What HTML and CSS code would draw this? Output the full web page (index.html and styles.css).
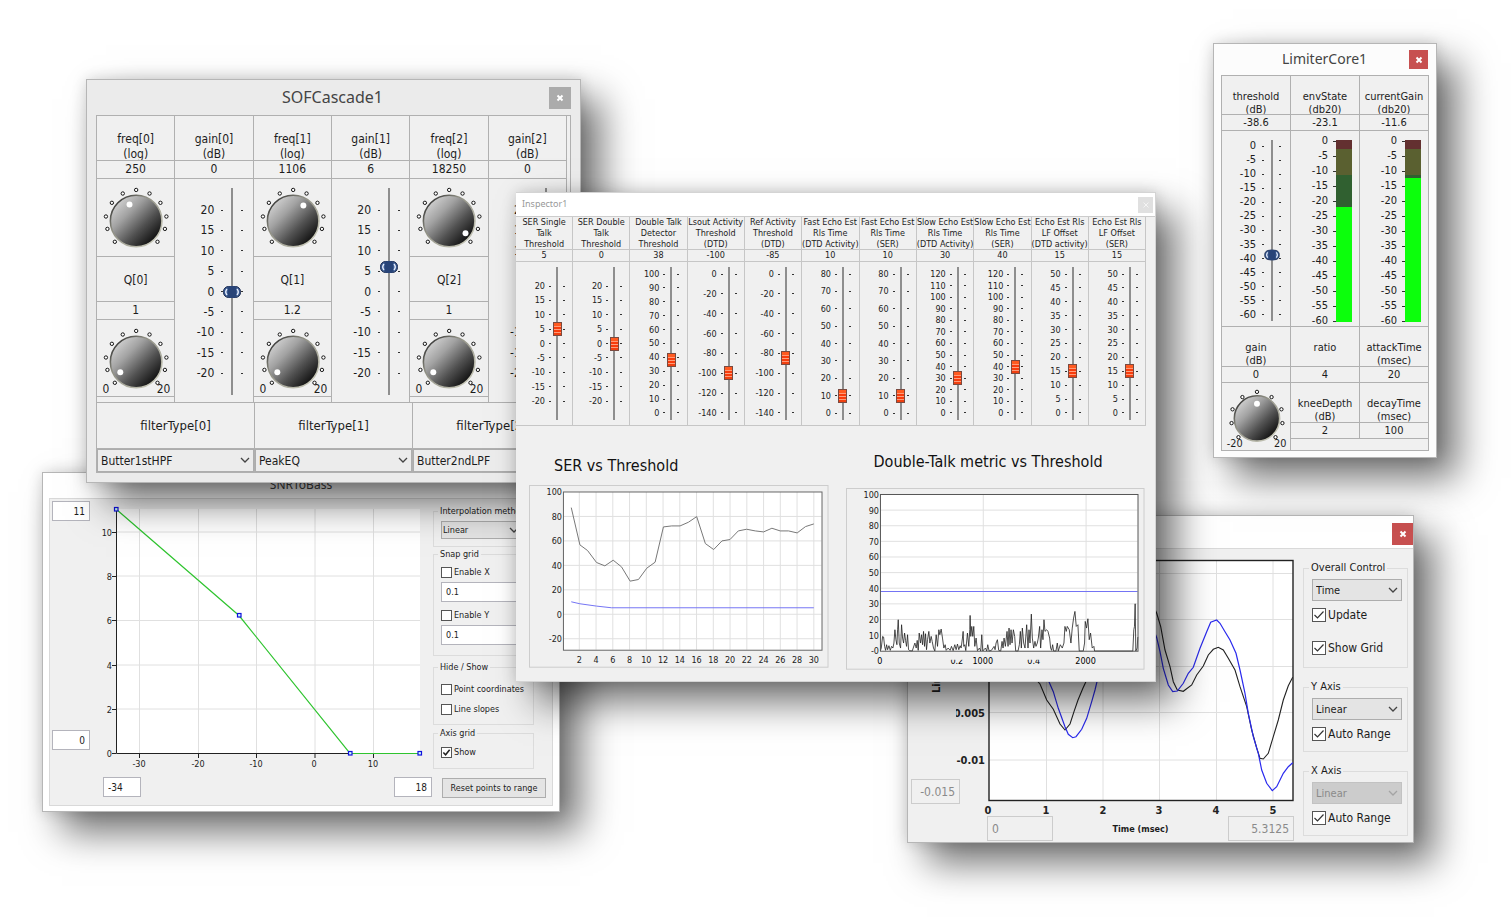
FILE: index.html
```html
<!DOCTYPE html>
<html lang="en">
<head>
<meta charset="utf-8">
<title>Audio tuning inspectors</title>
<link rel="stylesheet" href="styles.css">
</head>
<body>
<main class="desktop">

  <section class="window win-snr" aria-label="SNRToBass">
    <header class="titlebar"><h2 class="title">SNRToBass</h2></header>
    <div class="snr-body">
      <div class="snr-main">
        <div class="snr-range-y">
          <input class="field num" aria-label="Y maximum" value="11">
          <input class="field num" aria-label="Y minimum" value="0">
        </div>
        <svg class="snr-chart" viewBox="90 501 342 270" role="img" aria-label="Interpolation curve">
          <rect x="116" y="509" width="304" height="244" fill="#fff"/>
          <path class="grid" d="M139.5 509V753M198.500 509V753M256.500 509V753M315 509V753M373.500 509V753M116 532H420M116 576H420M116 620.500H420M116 665H420M116 709H420"/>
          <path d="M116.500 509V753.500H420M112 532.500h4M112 576.500h4M112 620.500h4M112 665.500h4M112 709.500h4M112 753.500h4M139.500 753v5M198.500 753v5M256.500 753v5M315 753v5M373.500 753v5" stroke="#222" fill="none"/>
          <g class="tick end"><text x="112" y="536">10</text><text x="112" y="580">8</text><text x="112" y="624">6</text><text x="112" y="669">4</text><text x="112" y="713">2</text><text x="112" y="757">0</text></g>
          <g class="tick mid"><text x="139" y="767">-30</text><text x="198" y="767">-20</text><text x="256" y="767">-10</text><text x="314" y="767">0</text><text x="373" y="767">10</text></g>
          <path d="M116.500 509.500L239 615.500L350 753.500H420" stroke="#2fc42f" stroke-width="1.200" fill="none"/>
          <g fill="#cfe" stroke="#1010e0" stroke-width="1.200"><rect x="114.500" y="507.500" width="3.500" height="3.500"/><rect x="237.500" y="613.500" width="3.500" height="3.500"/><rect x="348.500" y="751.500" width="3.500" height="3.500"/><rect x="418" y="751.500" width="3.500" height="3.500"/></g>
        </svg>
        <div class="snr-range-x">
          <input class="field" aria-label="X minimum" value="-34">
          <input class="field num" aria-label="X maximum" value="18">
        </div>
      </div>
      <div class="snr-side">
        <fieldset class="group g-interp"><legend>Interpolation method</legend>
          <select class="combo" aria-label="Interpolation method"><option>Linear</option></select>
        </fieldset>
        <fieldset class="group g-snap"><legend>Snap grid</legend>
          <label class="check"><input type="checkbox">Enable X</label>
          <input class="field wide" aria-label="X step" value="0.1">
          <label class="check"><input type="checkbox">Enable Y</label>
          <input class="field wide" aria-label="Y step" value="0.1">
        </fieldset>
        <fieldset class="group g-hide"><legend>Hide / Show</legend>
          <label class="check"><input type="checkbox">Point coordinates</label>
          <label class="check"><input type="checkbox">Line slopes</label>
        </fieldset>
        <fieldset class="group g-axis"><legend>Axis grid</legend>
          <label class="check"><input type="checkbox" checked>Show</label>
        </fieldset>
        <button class="push" type="button">Reset points to range</button>
      </div>
    </div>
  </section>

  <section class="window win-sof" aria-label="SOFCascade1">
    <header class="titlebar"><h2 class="title">SOFCascade1</h2><button class="close" type="button" aria-label="Close"><svg viewBox="0 0 8 8"><path d="M1.500 1.500L6.500 6.500M6.500 1.500L1.500 6.500"/></svg></button></header>
    <div class="sof-frame">
      <div class="sof-bands" id="bands"></div>
      <div class="sof-filters">
        <label class="cell" for="ft0">filterType[0]</label>
        <label class="cell" for="ft1">filterType[1]</label>
        <label class="cell" for="ft2">filterType[2]</label>
        <select class="combo" id="ft0"><option>Butter1stHPF</option></select>
        <select class="combo" id="ft1"><option>PeakEQ</option></select>
        <select class="combo" id="ft2"><option>Butter2ndLPF</option></select>
      </div>
    </div>
  </section>

  <section class="window win-time" aria-label="Time response">
    <header class="titlebar"><button class="close" type="button" aria-label="Close"><svg viewBox="0 0 8 8"><path d="M1.500 1.500L6.500 6.500M6.500 1.500L1.500 6.500"/></svg></button></header>
    <div class="time-body">
      <div class="time-main">
        <input class="field num y-min" aria-label="Y minimum" value="-0.015" disabled>
        <svg class="time-chart" viewBox="930 549 364 267" role="img" aria-label="Time plot">
          <rect x="989" y="561" width="304" height="240" fill="#fff"/>
          <path class="grid" d="M1046.500 561V800M1103 561V800M1159.500 561V800M1216.500 561V800M1273 561V800M989 573.500H1293M989 619.500H1293M989 666.500H1293M989 712.500H1293M989 760H1293"/>
          <rect x="989" y="560.500" width="304" height="240" fill="none" stroke="#222" stroke-width="1.400"/>
          <path d="M989 600L1000 590L1015 620L1036.700 680.300L1040 684L1046.700 700L1053.300 709.300L1060 724L1065 730L1070 724L1074 711.700L1078 700L1083 688L1086.700 680L1105 620L1130 585L1150 598L1156.700 613.300L1160.700 626.700L1165 650L1170 666.700L1173.300 681.700L1177.300 690L1183.300 691.300L1191.700 685L1196.700 675L1203.300 666L1208.300 655L1213.300 649.300L1218.300 647.300L1223.300 650L1228.300 658.300L1235 670L1240 686.700L1246.700 706.700L1251.700 730L1256.700 748L1260 758.300L1263.300 759L1268.300 753.300L1273.300 736.700L1278.300 720L1283.300 700L1288.300 685.700L1292.700 677.300" fill="none" stroke="#222" stroke-width="1.100"/>
          <path d="M989 600L1000 585L1020 610L1048.300 680.300L1053.300 691.700L1058.300 708.300L1065 726.700L1068.300 734.300L1072.700 737.700L1076 736.700L1081.700 729.300L1086.700 718.300L1091.700 701.700L1095 690L1097.300 680.300L1115 610L1135 580L1156.700 637.700L1160 651.700L1163.300 668.300L1168.300 685L1172.700 691.700L1177.300 691L1183.300 683.300L1188.300 673.300L1193.300 667.300L1200 648.300L1206.700 631.700L1210.700 622.300L1216.700 620L1220 623.300L1225 631.700L1230 640L1236 653.300L1240 670L1245 693.300L1248.300 713.300L1253.300 736.700L1258.300 753.300L1261.700 770L1266.700 783.300L1272.300 790.700L1276.700 786.700L1283.300 773.300L1288.300 766.700L1292.700 762.700" fill="none" stroke="#2a2aee" stroke-width="1.200"/>
          <g class="bold mid"><text x="988" y="814">0</text><text x="1046" y="814">1</text><text x="1103" y="814">2</text><text x="1159" y="814">3</text><text x="1216" y="814">4</text><text x="1273" y="814">5</text></g>
          <text class="bold end" x="985" y="764">-0.01</text>
          <svg x="956" y="704" width="30" height="16"><text class="bold end" x="29" y="13">-0.005</text></svg>
          <text class="bold" transform="translate(940 693) rotate(-90)">Linear</text>
        </svg>
        <div class="time-range">
          <input class="field" aria-label="X minimum" value="0" disabled>
          <span class="axis-name">Time (msec)</span>
          <input class="field num" aria-label="X maximum" value="5.3125" disabled>
        </div>
      </div>
      <div class="time-side">
        <fieldset class="group g-overall"><legend>Overall Control</legend>
          <select class="combo" aria-label="Overall control"><option>Time</option></select>
          <label class="check"><input type="checkbox" checked>Update</label>
          <label class="check"><input type="checkbox" checked>Show Grid</label>
        </fieldset>
        <fieldset class="group"><legend>Y Axis</legend>
          <select class="combo" aria-label="Y axis scale"><option>Linear</option></select>
          <label class="check"><input type="checkbox" checked>Auto Range</label>
        </fieldset>
        <fieldset class="group"><legend>X Axis</legend>
          <select class="combo" aria-label="X axis scale" disabled><option>Linear</option></select>
          <label class="check"><input type="checkbox" checked>Auto Range</label>
        </fieldset>
      </div>
    </div>
  </section>

  <section class="window win-inspector" aria-label="Inspector1">
    <header class="titlebar"><h2 class="title">Inspector1</h2><button class="close" type="button" aria-label="Close"><svg viewBox="0 0 8 8"><path d="M1.500 1.500L6.500 6.500M6.500 1.500L1.500 6.500"/></svg></button></header>
    <div class="insp-columns" id="inspector"></div>
    <div class="insp-plots">
      <figure class="plot">
        <figcaption>SER vs Threshold</figcaption>
        <svg class="plot-svg" viewBox="529 485 300 183" role="img" aria-label="SER vs Threshold">
          <rect class="frame" x="529.500" y="485.500" width="299" height="182"/>
          <rect x="563.500" y="492" width="259" height="158.500" fill="#fff"/>
          <path class="grid" id="gridA"/>
          <rect x="563.500" y="492" width="259" height="158.500" fill="none" stroke="#666"/>
          <g transform="translate(515 430) scale(.3333)" fill="none" stroke-width="3">
            <path stroke="#777" d="M169 233L195 345L218 362L245 398L270 408L295 391L320 411L346 454L371 449L396 415L421 397L446 291L471 288L496 288L521 277L546 260L572 341L597 359L622 333L646 329L671 303L696 298L722 303L747 306L772 295L797 303L822 303L848 309L873 290L898 282"/>
            <path stroke="#7474f4" d="M169 516L195 522L245 529L290 534H898"/>
          </g>
          <g class="tick end" id="yA"></g><g class="tick mid" id="xA"></g>
        </svg>
      </figure>
      <figure class="plot plot-b">
        <figcaption>Double-Talk metric vs Threshold</figcaption>
        <svg class="plot-svg" viewBox="846 488 300 182" role="img" aria-label="Double-Talk metric vs Threshold">
          <rect class="frame" x="846.500" y="488.500" width="298" height="181"/>
          <rect x="880.500" y="494.500" width="258" height="157" fill="#fff"/>
          <path class="grid" id="gridB"/>
          <path d="M880.500 591.700H1138" stroke="#7474f4" stroke-width="1.200"/>
          <path transform="translate(835 430) scale(.3333)" fill="none" stroke="#222" stroke-width="2.400" d="M136 664L139 655L143 620L146 622L149 650L152 662L155 645L158 660L162 648L166 662L170 650L174 655L177 640L180 600L183 630L186 645L188 600L190 570L193 640L197 655L200 585L203 625L206 640L209 610L212 632L215 650L218 615L221 660L225 663L232 664L240 640L244 655L247 632L250 662L253 610L257 640L260 615L263 645L266 605L269 650L272 612L275 660L278 630L282 605L285 640L289 620L292 635L296 655L300 664L304 615L308 650L312 600L315 615L319 598L323 625L327 655L331 645L334 662L340 655L346 662L350 650L355 663L360 645L364 660L368 643L372 660L376 648L379 655L383 625L385 605L387 650L390 645L393 663L398 610L402 650L405 600L406 557L408 620L411 590L414 620L417 590L420 650L424 625L428 663L434 655L438 664L441 615L444 664L452 655L456 664L459 645L463 664L470 662L478 650L481 660L484 640L488 630L492 662L498 664L502 635L505 655L508 625L512 650L517 605L520 650L523 595L526 645L529 600L532 640L536 600L540 620L543 664L550 664L554 645L557 605L560 655L563 595L567 640L571 655L576 585L580 655L583 600L586 640L590 553L593 625L597 655L601 635L604 650L608 640L611 625L615 590L618 655L622 600L625 630L628 570L631 605L636 600L640 605L645 625L648 655L651 662L654 645L657 664L664 664L668 640L671 664L677 645L683 655L688 640L691 590L695 605L698 590L704 600L709 640L713 595L717 565L721 545L725 590L730 585L734 664L746 664L750 640L752 575L756 595L760 567L764 630L768 610L773 655L778 650L780 664L895 664L898 600L900 590L902 522L904 664L908 655L910 622"/>
          <rect x="880.500" y="494.500" width="258" height="157" fill="none" stroke="#555"/>
          <g class="tick end" id="yB"></g>
          <g class="tick mid dark"><text x="880" y="664">0</text><text x="983" y="664">1000</text><text x="1086" y="664">2000</text></g>
          <svg x="945" y="660" width="24" height="5"><text class="tick mid dark" x="12" y="4">0.2</text></svg>
          <svg x="1022" y="660" width="24" height="5"><text class="tick mid dark" x="12" y="4">0.4</text></svg>
        </svg>
      </figure>
    </div>
  </section>

  <section class="window win-limiter" aria-label="LimiterCore1">
    <header class="titlebar"><h2 class="title">LimiterCore1</h2><button class="close" type="button" aria-label="Close"><svg viewBox="0 0 8 8"><path d="M1.500 1.500L6.500 6.500M6.500 1.500L1.500 6.500"/></svg></button></header>
    <div class="lim-grid" id="limiter"></div>
  </section>

</main>
<svg class="defs" aria-hidden="true">
  <defs>
    <linearGradient id="knob" x1=".12" y1=".12" x2=".88" y2=".88"><stop offset="0" stop-color="#d2d2d2"/><stop offset=".3" stop-color="#a2a2a2"/><stop offset=".65" stop-color="#515151"/><stop offset="1" stop-color="#0c0c0c"/></linearGradient>
    <linearGradient id="rim" x1=".1" y1=".1" x2=".9" y2=".9"><stop offset="0" stop-color="#333"/><stop offset=".3" stop-color="#8b8b80"/><stop offset="1" stop-color="#c8c8b8"/></linearGradient>
  </defs>
</svg>
<script src="app.js"></script>
</body>
</html>
```
FILE: styles.css
```css
* { box-sizing: border-box; }

body {
  margin: 0;
  background: #fff;
  color: #1c1c1c;
  font-family: "DejaVu Sans Condensed", "Noto Sans", sans-serif;
}

h2, ul, figure { margin: 0; padding: 0; font-weight: 400; }
ul { list-style: none; }
input, select, button { font: inherit; color: inherit; margin: 0; }
.defs { position: absolute; width: 0; height: 0; }

.desktop {
  position: relative;
  min-height: 100vh;
  overflow: hidden;
}

/* Windows */
.window {
  position: absolute;
  border: 1px solid #b6b6b6;
  background: #f0f0f0;
  box-shadow: 20px 20px 36px rgba(0, 0, 0, .56), 0 0 14px rgba(0, 0, 0, .16);
}
.win-snr { left: 42px; top: 472px; width: 518px; padding: 0 6px 5px; background: #fff; font-size: 10px; }
.win-sof { left: 86px; top: 79px; width: 495px; padding: 0 9px 9px; background: #ebebeb; font-size: 12px; }
.win-time { left: 907px; top: 515px; width: 507px; font-size: 12px; }
.win-inspector { left: 516px; top: 192px; width: 640px; padding-bottom: 11px; font-size: 10px; border-color: #d4d4d4; border-left-width: 0; }
.win-limiter { left: 1213px; top: 43px; width: 224px; padding: 0 7px 6px; background: #fcfcfc; font-size: 11px; }

.titlebar { display: flex; align-items: center; justify-content: center; }
.title { font-family: "Noto Sans", sans-serif; color: #444; }
.close {
  display: flex;
  align-items: center;
  justify-content: center;
  padding: 0;
  border: 0;
  background: #c75050;
}
.close svg { width: 8px; height: 8px; }
.close path { stroke: #fff; stroke-width: 2; fill: none; }

.win-sof .titlebar { height: 35px; }
.win-sof .title { flex: 1; padding-left: 20px; text-align: center; font-size: 16px; line-height: 20px; padding-bottom: 2px; }
.win-sof .close { width: 22px; height: 22px; background: #ababab; }
.win-limiter .titlebar { height: 31px; }
.win-limiter .title { flex: 1; padding-left: 19px; text-align: center; font-size: 14px; line-height: 18px; padding-bottom: 2px; }
.win-limiter .close { width: 19px; height: 19px; margin-right: 1px; }
.win-snr .titlebar { height: 25px; }
.win-snr .title { font-size: 12px; line-height: 16px; padding-bottom: 1px; }
.win-time .titlebar { height: 33px; justify-content: flex-end; background: #fff; border-bottom: 1px solid #d9d9d9; padding-top: 4px; }
.win-time .close { width: 21px; height: 22px; }
.win-inspector .titlebar { height: 24px; justify-content: space-between; background: #fff; border-bottom: 1px solid #ccc; padding: 0 2px 0 6px; }
.win-inspector .title { font-size: 9px; line-height: 14px; padding-bottom: 2px; color: #999; }
.win-inspector .close { width: 15px; height: 16px; background: #e0e0e0; }
.win-inspector .close path { stroke: #f4f4f4; stroke-width: 1; }

/* Shared controls */
.combo {
  display: block;
  appearance: none;
  border: 1px solid #adadad;
  border-radius: 0;
  padding: 0 4px;
  background: url("data:image/svg+xml,%3Csvg xmlns='http://www.w3.org/2000/svg' width='10' height='7' fill='none' stroke='%23444' stroke-width='1.3'%3E%3Cpath d='M1 1l4 4 4-4'/%3E%3C/svg%3E") no-repeat right 3px center, #e4e4e4;
}
.combo:disabled {
  color: #8a8a8a;
  opacity: 1;
  border-color: #c2c2c2;
  background: url("data:image/svg+xml,%3Csvg xmlns='http://www.w3.org/2000/svg' width='10' height='7' fill='none' stroke='%23a4a4a4' stroke-width='1.3'%3E%3Cpath d='M1 1l4 4 4-4'/%3E%3C/svg%3E") no-repeat right 3px center, #ccc;
}
.field {
  height: 20px;
  border: 1px solid #b4b4bc;
  padding: 0 4px;
  background: #fff;
  min-width: 0;
}
.field:disabled { background: #f0f0f0; color: #8a8a8a; border-color: #ccc; }
.field.num { text-align: right; }
.group { margin: 0; border: 1px solid #dcdcdc; min-width: 0; padding: 0 7px; }
.group legend { padding: 0 2px; margin-left: -3px; white-space: nowrap; }
.check { display: flex; align-items: center; gap: 2px; white-space: nowrap; }
.check input {
  flex: none;
  appearance: none;
  width: 11px;
  height: 11px;
  border: 1px solid #555;
  background: #fff no-repeat center;
}
.check input:checked {
  background-image: url("data:image/svg+xml,%3Csvg xmlns='http://www.w3.org/2000/svg' viewBox='0 0 10 10' fill='none' stroke='%23222' stroke-width='1.7'%3E%3Cpath d='M1.500 5l2.500 2.500L8.500 2'/%3E%3C/svg%3E");
}
.push { height: 20px; padding: 0; border: 1px solid #adadad; background: #e4e4e4; white-space: nowrap; }

/* Charts */
.grid { stroke: #e0e0e0; stroke-width: 1; fill: none; }
.tick { font-size: 9px; fill: #222; }
.bold { font-size: 11px; font-weight: 700; fill: #222; }
.mid { text-anchor: middle; }
.end { text-anchor: end; }
.dark { fill: #000; }

/* SNRToBass */
.snr-body { display: flex; border: 1px solid #d9d9d9; background: #f0f0f0; padding: 2px 0 7px 2px; }
.snr-main { display: grid; grid-template-columns: 38px 342px; align-content: start; }
.snr-range-y { display: flex; flex-direction: column; justify-content: space-between; padding-bottom: 21px; }
.snr-chart { display: block; width: 100%; }
.snr-range-x { grid-column: 1 / 3; display: flex; justify-content: space-between; padding: 6px 0 0 51px; }
.snr-range-x .field, .snr-range-y .field { width: 38px; }
.snr-side { display: flex; flex-direction: column; width: 113px; padding: 4px 0 0 1px; font-size: 9px; }
.snr-side .group { width: 101px; height: 42px; margin-bottom: 6px; }
.snr-side .g-interp { margin-bottom: 1px; }
.snr-side legend { line-height: 12px; }
.snr-side .combo { width: 82px; height: 18px; margin-top: 4px; padding: 0 1px; }
.snr-side .field { width: 86px; }
.snr-side .check { height: 20px; }
.snr-side .g-snap { height: 108px; margin-bottom: 5px; }
.snr-side .g-snap .check { margin-top: 3px; }
.snr-side .g-snap .check:first-of-type { margin-top: 2px; }
.snr-side .g-hide { height: 64px; margin-bottom: 2px; }
.snr-side .g-hide .check:first-of-type { margin-top: 6px; }
.snr-side .g-axis { height: 42px; }
.snr-side .g-axis .check { margin-top: 3px; }
.snr-side .push { width: 104px; margin: 3px 0 0 9px; }

/* Faders */
.fader {
  display: grid;
  grid-template-columns: var(--num) var(--rail);
  column-gap: var(--gap);
  justify-content: start;
  background: #f0f0f0;
}
.scale {
  grid-area: 1 / 1 / 2 / 3;
  display: flex;
  flex-direction: column;
  justify-content: space-between;
}
.scale li { display: flex; align-items: center; line-height: 12px; height: 12px; }
.scale b { width: var(--num); margin-right: var(--gap); font-weight: 400; text-align: right; }
.scale i { width: 2px; height: 1px; background: #333; }
.scale i + i { margin-left: auto; }
.fader input {
  grid-area: 1 / 2;
  justify-self: center;
  appearance: none;
  writing-mode: vertical-lr;
  direction: rtl;
  width: 20px;
  height: 100%;
  background: linear-gradient(#8e8e8e, #8e8e8e) no-repeat center / 2px 100%;
}
.fader input::-webkit-slider-thumb {
  appearance: none;
  width: 18px;
  height: 14px;
  border: 0;
  background: url("data:image/svg+xml,%3Csvg xmlns='http://www.w3.org/2000/svg' viewBox='0 0 18 14'%3E%3Crect x='.5' y='1.500' width='17' height='11' rx='5' fill='%233a5a90' stroke='%231c2c50'/%3E%3Crect x='5' y='1' width='8' height='12' rx='2' fill='%23284478'/%3E%3Cpath d='M4 4q-2.500 3 0 6M14 4q2.500 3 0 6' fill='none' stroke='%23e8f0ff' stroke-width='1.400'/%3E%3C/svg%3E") center / 100% 100% no-repeat;
}

/* Header, value and control cells */
.cell { background: #f0f0f0; text-align: center; overflow: hidden; white-space: pre-line; }
.dial { display: block; width: 100%; height: 100%; background: #f0f0f0; }
.dial text { font-size: 12px; fill: #1c1c1c; }

/* SOFCascade1 */
.sof-frame { border: 1px solid #b0b0b0; background: #b0b0b0; width: 475px; display: grid; gap: 1px; }
.sof-bands {
  display: grid;
  grid-template-columns: repeat(6, 1fr) 3px;
  grid-template-rows: 44px 17px 77px 44px 17px 76px 5px;
  grid-auto-flow: column;
  gap: 1px;
}
.sof-bands .head { padding-top: 16px; line-height: 15px; }
.sof-bands .value { line-height: 17px; }
.sof-bands .fader { grid-row: 3 / 8; padding-block: 9px 7px; --num: 39px; --gap: 7px; --rail: 22px; }
.sof-bands .scale { padding-block: 16px; }
.sof-bands .spacer { grid-row: 1 / 8; }
.sof-filters { display: grid; grid-template-columns: repeat(3, 1fr); gap: 1px; }
.sof-filters .cell { line-height: 45px; font-size: 13px; }
.sof-filters .combo { width: 100%; height: 23px; padding: 0 3px; background-color: #ececec; }

/* Inspector1 */
.insp-columns {
  display: grid;
  grid-template-columns: repeat(11, 1fr);
  grid-template-rows: 32px 11px 163px;
  grid-auto-flow: column;
  gap: 1px;
  margin-right: 9px;
  border: solid #c6c6c6;
  border-width: 0 1px 1px 0;
  background: #c6c6c6;
  font-size: 9px;
}
.insp-columns .head { display: flex; justify-content: center; line-height: 11px; overflow: visible; white-space: pre; }
.insp-columns .value { line-height: 11px; }
.insp-columns .fader { padding-block: 5px; --num: 29px; --gap: 4px; --rail: 16px; }
.insp-columns .scale { padding-block: 2px; }
.insp-columns .scale.inset { padding-block: 14px; }
.insp-columns .scale li { height: 10px; line-height: 10px; }
.insp-columns input::-webkit-slider-thumb {
  width: 9px;
  height: 14px;
  border: 1px solid #7a4a40;
  background: linear-gradient(#ff5a20 0 3px, #ff9a78 3px 4px, #f83c0c 4px 6px, #ffa080 6px 7px, #f83c0c 7px 9px, #ff9a78 9px 10px, #f04010 10px);
}
.insp-plots { display: flex; gap: 17px; padding: 30px 10px 0 13px; }
.plot { flex: 1; }
.plot-svg { display: block; width: 100%; }
.plot figcaption { padding: 0 0 9px 25px; font-size: 16px; line-height: 20px; color: #111; }
.plot-b { margin-top: -4px; }
.plot-b figcaption { padding: 0 0 16px 28px; }
.frame { fill: none; stroke: #cdcdcd; }

/* LimiterCore1 */
.lim-grid {
  display: grid;
  grid-template-columns: repeat(3, 1fr);
  grid-template-rows: 38px 15px 195px 39px 15px 39px 15px 11px;
  gap: 1px;
  border: 1px solid #b0b0b0;
  background: #b0b0b0;
}
.lim-grid .head { padding-top: 14px; line-height: 13px; }
.lim-grid .value { line-height: 15px; }
.lim-grid .dial { grid-row: 6 / 9; }
.lim-grid .dial text { font-size: 11px; }
.lim-grid .blank { grid-column: 2 / 4; }
.lim-grid .fader { padding-block: 9px 5px; --num: 34px; --gap: 6px; --rail: 19px; }
.lim-grid .fader input::-webkit-slider-thumb { width: 16px; height: 12px; }
.meter { display: flex; background: #f0f0f0; padding-top: 4px; }
.meter .scale { width: 45px; height: 192px; --num: 37px; --gap: 5px; }
.meter .scale i { width: 3px; }
.meter .scale i + i { display: none; }
.meter .bar { width: 16px; height: 182px; margin-top: 5px; background: linear-gradient(#633030 0 9px, #5a6030 9px 35px, #306030 35px); display: flex; align-items: flex-end; }
.meter .level { width: 100%; background: #0cff0c; }

/* Time window */
.time-body { display: flex; padding: 0 5px 1px 3px; }
.time-main { display: grid; grid-template-columns: 19px 364px; align-content: start; }
.time-main .y-min { grid-area: 1 / 1; align-self: end; width: 49px; height: 25px; margin-bottom: 12px; }
.time-chart { grid-area: 1 / 2; display: block; width: 100%; }
.time-range { grid-column: 1 / 3; display: flex; justify-content: space-between; align-items: center; padding-left: 76px; }
.time-range .field { width: 66px; height: 25px; }
.axis-name { font-size: 9px; font-weight: 700; }
.time-side { flex: 1; padding: 12px 0 0 9px; }
.time-side .group { height: 72px; margin-bottom: 12px; padding: 0 5px 0 8px; }
.time-side .group:last-child { margin-bottom: 0; }
.time-side .g-overall { height: 107px; }
.time-side legend { line-height: 14px; font-size: 11px; }
.time-side .combo { width: 100%; height: 22px; margin-top: 4px; padding: 0 3px; font-size: 11px; }
.time-side .check { height: 26px; margin-top: 1px; }
.time-side .check + .check { margin-top: 7px; }
.time-side .check input { width: 14px; height: 14px; }
.time-side .check input:checked {
  background-image: url("data:image/svg+xml,%3Csvg xmlns='http://www.w3.org/2000/svg' viewBox='0 0 12 12' fill='none' stroke='%23333' stroke-width='1.2'%3E%3Cpath d='M1.500 6l3 3L10.500 2.500'/%3E%3C/svg%3E");
}
```
FILE: app.js
```js
const range = (from, to, step) => {
  const out = [];
  for (let v = from; step > 0 ? v <= to : v >= to; v += step) out.push(v);
  return out;
};

const scale = (ticks, cls = '') =>
  `<ul class="scale ${cls}">${ticks.map(t => `<li><b>${t}</b><i></i><i></i></li>`).join('')}</ul>`;

const head = text => `<div class="cell head">${text}</div>`;
const value = text => `<div class="cell value">${text}</div>`;

const fader = (name, ticks, min, max, val, cls) =>
  `<div class="fader">${scale(ticks, cls)}<input type="range" aria-label="${name}" min="${min}" max="${max}" step="0.1" value="${val}"></div>`;

const dial = (w, h, cx, cy, r, dots, mark, labels) => {
  const rings = dots.flatMap(([x, y]) => (x ? [[x, y], [-x, y]] : [[x, y]]))
    .map(([x, y]) => `<circle cx="${cx + x}" cy="${cy + y}" r="1.700" fill="#fff" stroke="#111"/>`).join('');
  return `<svg class="dial" viewBox="0 0 ${w} ${h}" role="img" aria-label="dial">${rings}
    <circle cx="${cx}" cy="${cy}" r="${r}" fill="url(#knob)" stroke="url(#rim)" stroke-width="1.600"/>
    <circle cx="${cx + mark[0]}" cy="${cy + mark[1]}" r="3" fill="#fff"/>
    ${labels.map(([x, y, t]) => `<text class="mid" x="${x}" y="${y}">${t}</text>`).join('')}</svg>`;
};

const bigDots = [[0, -31.3], [13.5, -27.7], [24.5, -18.3], [30.5, -4.5], [29, 8], [21.5, 21]];
const smallDots = [[0, -27], [14.8, -21.7], [24.8, -9.3], [25.8, 4.7], [18.8, 19]];

document.getElementById('bands').innerHTML = [
  [250, [-6.7, -16.7], 1, 0],
  [1106, [10.3, -15.7], 1.2, 6],
  [18250, [16.5, 12.3], 1, 0]
].map(([freq, mark, q, gain], i) =>
  head(`freq[${i}]\n(log)`) + value(freq) + dial(78, 77, 39.5, 42, 26, bigDots, mark, []) +
  head(`Q[${i}]`) + value(q) +
  dial(78, 76, 39.5, 42, 26, bigDots, [-16, 10.3], [[9, 73, '0'], [67, 73, '20']]) + '<div class="cell"></div>' +
  head(`gain[${i}]\n(dB)`) + value(gain) + fader(`gain ${i}`, range(20, -20, -5), -24, 24, gain)
).join('') + '<div class="cell spacer"></div>';

document.getElementById('inspector').innerHTML = [
  ['SER Single\nTalk\nThreshold', 5, range(20, -20, -5), -24, 24],
  ['SER Double\nTalk\nThreshold', 0, range(20, -20, -5), -24, 24],
  ['Double Talk\nDetector\nThreshold', 38, range(100, 0, -10), 0, 100],
  ['Lsout Activity\nThreshold\n(DTD)', -100, range(0, -140, -20), -140, 0],
  ['Ref Activity\nThreshold\n(DTD)', -85, range(0, -140, -20), -140, 0],
  ['Fast Echo Est\nRls Time\n(DTD Activity)', 10, range(80, 0, -10), 0, 80],
  ['Fast Echo Est\nRls Time\n(SER)', 10, range(80, 0, -10), 0, 80],
  ['Slow Echo Est\nRls Time\n(DTD Activity)', 30, range(120, 0, -10), 0, 120],
  ['Slow Echo Est\nRls Time\n(SER)', 40, range(120, 0, -10), 0, 120],
  ['Echo Est Rls\nLF Offset\n(DTD activity)', 15, range(50, 0, -5), 0, 50],
  ['Echo Est Rls\nLF Offset\n(SER)', 15, range(50, 0, -5), 0, 50]
].map(([name, val, ticks, min, max]) =>
  head(name) + value(val) + fader(name.replace(/\n/g, ' '), ticks, min, max, val, max === 24 ? 'inset' : '')
).join('');

const meter = (name, level) =>
  `<div class="meter">${scale(range(0, -60, -5))}<div class="bar" role="meter" aria-label="${name}"><div class="level" style="height:${level}%"></div></div></div>`;

document.getElementById('limiter').innerHTML =
  head('threshold\n(dB)') + head('envState\n(db20)') + head('currentGain\n(db20)') +
  value('-38.6') + value('-23.1') + value('-11.6') +
  fader('threshold', range(0, -60, -5), -60, 0, -38.6) + meter('envState', 63.3) + meter('currentGain', 79) +
  head('gain\n(dB)') + head('ratio') + head('attackTime\n(msec)') +
  value(0) + value(4) + value(20) +
  dial(69, 67, 35.5, 35.5, 23, smallDots, [0, -15], [[13, 64, '-20'], [59, 64, '20']]) +
  head('kneeDepth\n(dB)') + head('decayTime\n(msec)') + value(2) + value(100) + '<div class="cell blank"></div>';

const texts = list => list.map(([x, y, t]) => `<text x="${x}" y="${y}">${t}</text>`).join('');
const ax = n => 562.6 + n * 8.39;
document.getElementById('xA').innerHTML = texts(range(2, 30, 2).map(n => [ax(n), 663, n]));
document.getElementById('yA').innerHTML = texts(range(100, -20, -20).map(n => [562, 495.500 + (100 - n) * 1.225, n]));
document.getElementById('gridA').setAttribute('d',
  range(2, 30, 2).map(n => `M${ax(n)} 492V650`).join('') +
  range(80, -20, -20).map(n => `M563.500 ${492 + (100 - n) * 1.225}H822`).join(''));
document.getElementById('yB').innerHTML = texts(range(100, 0, -10).map(n => [879, 498 + (100 - n) * 1.565, n || '-0']));
document.getElementById('gridB').setAttribute('d', 'M983.500 495V651M1086.500 495V651' +
  range(90, 10, -10).map(n => `M881 ${494.500 + (100 - n) * 1.565}H1138`).join(''));
```
